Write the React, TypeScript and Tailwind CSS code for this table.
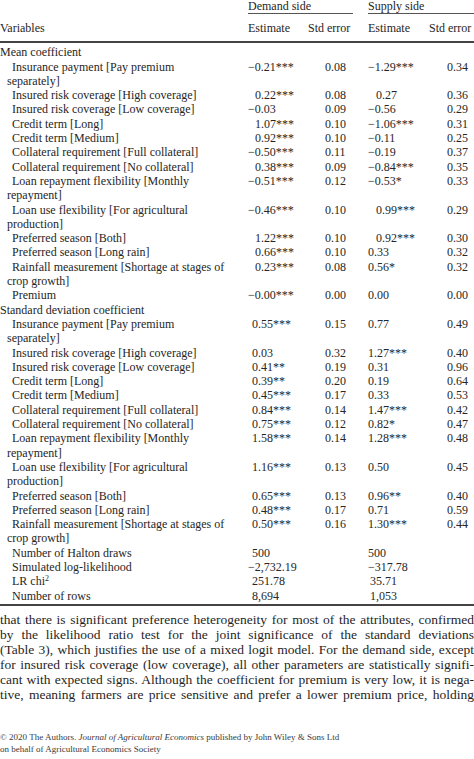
type Row = {
  head?: string;
  label?: string[];
  d?: string;
  ds?: string;
  s?: string;
  ss?: string;
  di?: string;
  si?: string;
  stat?: boolean;
};

const IND = "pl-[7px]";
const IND_SD = "pl-[4px]";

const rows: Row[] = [
  { head: "Mean coefficient" },
  { label: ["Insurance payment [Pay premium", "separately]"], d: "−0.21***", ds: "0.08", s: "−1.29***", ss: "0.34" },
  { label: ["Insured risk coverage [High coverage]"], d: "0.22***", ds: "0.08", s: "0.27", ss: "0.36", di: IND, si: "pl-[8px]" },
  { label: ["Insured risk coverage [Low coverage]"], d: "−0.03", ds: "0.09", s: "−0.56", ss: "0.29" },
  { label: ["Credit term [Long]"], d: "1.07***", ds: "0.10", s: "−1.06***", ss: "0.31", di: IND },
  { label: ["Credit term [Medium]"], d: "0.92***", ds: "0.10", s: "−0.11", ss: "0.25", di: IND },
  { label: ["Collateral requirement [Full collateral]"], d: "−0.50***", ds: "0.11", s: "−0.19", ss: "0.37" },
  { label: ["Collateral requirement [No collateral]"], d: "0.38***", ds: "0.09", s: "−0.84***", ss: "0.35", di: IND },
  { label: ["Loan repayment flexibility [Monthly", "repayment]"], d: "−0.51***", ds: "0.12", s: "−0.53*", ss: "0.33" },
  { label: ["Loan use flexibility [For agricultural", "production]"], d: "−0.46***", ds: "0.10", s: "0.99***", ss: "0.29", si: "pl-[8px]" },
  { label: ["Preferred season [Both]"], d: "1.22***", ds: "0.10", s: "0.92***", ss: "0.30", di: IND, si: "pl-[8px]" },
  { label: ["Preferred season [Long rain]"], d: "0.66***", ds: "0.10", s: "0.33", ss: "0.32", di: IND },
  { label: ["Rainfall measurement [Shortage at stages of", "crop growth]"], d: "0.23***", ds: "0.08", s: "0.56*", ss: "0.32", di: IND },
  { label: ["Premium"], d: "−0.00***", ds: "0.00", s: "0.00", ss: "0.00" },
  { head: "Standard deviation coefficient" },
  { label: ["Insurance payment [Pay premium", "separately]"], d: "0.55***", ds: "0.15", s: "0.77", ss: "0.49", di: IND_SD },
  { label: ["Insured risk coverage [High coverage]"], d: "0.03", ds: "0.32", s: "1.27***", ss: "0.40", di: IND_SD },
  { label: ["Insured risk coverage [Low coverage]"], d: "0.41**", ds: "0.19", s: "0.31", ss: "0.96", di: IND_SD },
  { label: ["Credit term [Long]"], d: "0.39**", ds: "0.20", s: "0.19", ss: "0.64", di: IND_SD },
  { label: ["Credit term [Medium]"], d: "0.45***", ds: "0.17", s: "0.33", ss: "0.53", di: IND_SD },
  { label: ["Collateral requirement [Full collateral]"], d: "0.84***", ds: "0.14", s: "1.47***", ss: "0.42", di: IND_SD },
  { label: ["Collateral requirement [No collateral]"], d: "0.75***", ds: "0.12", s: "0.82*", ss: "0.47", di: IND_SD },
  { label: ["Loan repayment flexibility [Monthly", "repayment]"], d: "1.58***", ds: "0.14", s: "1.28***", ss: "0.48", di: IND_SD },
  { label: ["Loan use flexibility [For agricultural", "production]"], d: "1.16***", ds: "0.13", s: "0.50", ss: "0.45", di: IND_SD },
  { label: ["Preferred season [Both]"], d: "0.65***", ds: "0.13", s: "0.96**", ss: "0.40", di: IND_SD },
  { label: ["Preferred season [Long rain]"], d: "0.48***", ds: "0.17", s: "0.71", ss: "0.59", di: IND_SD },
  { label: ["Rainfall measurement [Shortage at stages of", "crop growth]"], d: "0.50***", ds: "0.16", s: "1.30***", ss: "0.44", di: IND_SD },
  { label: ["Number of Halton draws"], d: "500", s: "500", di: IND_SD, stat: true },
  { label: ["Simulated log-likelihood"], d: "−2,732.19", s: "−317.78", stat: true },
  { label: ["LR chi²"], d: "251.78", s: "35.71", di: IND_SD, si: "pl-[2px]", stat: true },
  { label: ["Number of rows"], d: "8,694", s: "1,053", di: IND_SD, si: "pl-[2px]", stat: true },
];

const paragraph = [
  "that there is significant preference heterogeneity for most of the attributes, confirmed",
  "by the likelihood ratio test for the joint significance of the standard deviations",
  "(Table 3), which justifies the use of a mixed logit model. For the demand side, except",
  "for insured risk coverage (low coverage), all other parameters are statistically signifi-",
  "cant with expected signs. Although the coefficient for premium is very low, it is nega-",
  "tive, meaning farmers are price sensitive and prefer a lower premium price, holding",
];

function Label({ lines }: { lines: string[] }) {
  return (
    <div>
      {lines.map((line, i) => (
        <div key={i} className={i === 0 ? "pl-[12px]" : "pl-[7px]"}>
          {line === "LR chi²" ? (
            <>
              LR chi<sup className="text-[8px]">2</sup>
            </>
          ) : (
            line
          )}
        </div>
      ))}
    </div>
  );
}

function TableRow({ row }: { row: Row }) {
  if (row.head) {
    return <div>{row.head}</div>;
  }
  return (
    <div className="grid grid-cols-[248px_60px_60px_61px_45px] items-start">
      <Label lines={row.label ?? []} />
      {row.stat ? (
        <>
          <div className={`col-span-2 ${row.di ?? ""}`}>{row.d}</div>
          <div className={`col-span-2 ${row.si ?? ""}`}>{row.s}</div>
        </>
      ) : (
        <>
          <div className={row.di ?? ""}>{row.d}</div>
          <div className="pl-[17px]">{row.ds}</div>
          <div className={row.si ?? ""}>{row.s}</div>
          <div className="pl-[18px]">{row.ss}</div>
        </>
      )}
    </div>
  );
}

export default function App() {
  return (
    <div className="w-[474px] h-[759px] overflow-hidden bg-white text-[#262626] font-['Liberation_Serif',serif]">
      {/* Table */}
      <div className="text-[12px] leading-[14.3px]">
        <div className="grid grid-cols-[248px_120px_106px] h-[14px] leading-[12px]">
          <div />
          <div className="w-[105px] h-[14px] border-b border-[#555]">Demand side</div>
          <div className="h-[14px] border-b border-[#555]">Supply side</div>
        </div>
        <div className="grid grid-cols-[248px_60px_60px_61px_45px] pt-[7px] pb-[6px] border-b-2 border-[#444]">
          <div>Variables</div>
          <div>Estimate</div>
          <div>Std error</div>
          <div>Estimate</div>
          <div>Std error</div>
        </div>
        <div className="pt-[2px] pb-[1px] border-b-2 border-[#444]">
          {rows.map((row, i) => (
            <TableRow key={i} row={row} />
          ))}
        </div>
      </div>

      {/* Body text */}
      <div className="mt-[6px] text-[13.5px] leading-[15px] text-[#1f1f1f]">
        {paragraph.map((line, i) => (
          <div key={i} className="whitespace-nowrap text-justify [text-align-last:justify]">
            {line}
          </div>
        ))}
      </div>

      {/* Footer */}
      <div className="mt-[29px] text-[9px] leading-[12px] text-[#3a3a3a]">
        <div>
          © 2020 The Authors. <i>Journal of Agricultural Economics</i> published by John Wiley &amp; Sons Ltd
        </div>
        <div>on behalf of Agricultural Economics Society</div>
      </div>
    </div>
  );
}
